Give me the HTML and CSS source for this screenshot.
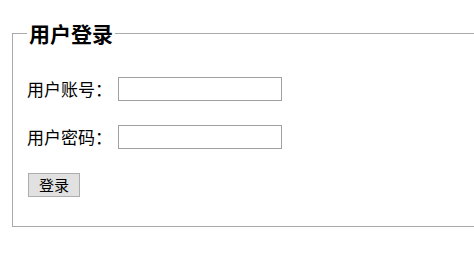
FILE: index.html
```html
<!DOCTYPE html>
<html lang="zh-CN">
<head>
    <meta charset="UTF-8">
    <meta name="viewport" content="width=device-width, initial-scale=1.0">
    <title>用户登录</title>
    <link rel="stylesheet" href="styles.css">
</head>
<body>

    <!-- 登录表单 -->
    <form class="login-form">
        <fieldset class="login-box">
            <legend class="login-title">用户登录</legend>
            <div class="form-row">
                <label for="account">用户账号：</label>
                <input type="text" id="account" class="form-input">
            </div>
            <div class="form-row">
                <label for="password">用户密码：</label>
                <input type="password" id="password" class="form-input">
            </div>
            <div class="form-row">
                <button type="button" class="login-btn">登录</button>
            </div>
        </fieldset>
    </form>

</body>
</html>
```
FILE: styles.css
```css
body {
    margin: 0;
    padding: 21px 0 0 12px;
    font-family: "Noto Sans CJK SC", "DejaVu Sans", sans-serif;
    font-size: 17px;
    color: #000;
    background-color: #fff;
}

.login-form {
    margin: 0;
}

/* 外框 - prawa krawędź poza ekranem */
.login-box {
    margin: 0;
    padding: 32px 0 29px 14px;
    border: 1px solid #a9a9a9;
    border-right: none;
}

.login-title {
    font-size: 21px;
    font-weight: bold;
    padding: 0 2px;
    line-height: 24px;
}

.form-row {
    display: flex;
    align-items: center;
    height: 24px;
    margin-bottom: 24px;
}

.form-row:last-child {
    margin-bottom: 0;
}

.form-row label {
    width: 91px;
    line-height: 24px;
}

.form-input {
    width: 164px;
    height: 24px;
    box-sizing: border-box;
    margin: 0;
    border: 1px solid #a0a0a0;
    padding: 1px 2px;
}

.login-btn {
    width: 52px;
    height: 24px;
    box-sizing: border-box;
    margin-left: 1px;
    padding: 0;
    font-family: "Noto Sans CJK SC", sans-serif;
    font-size: 15px;
    line-height: 20px;
    color: #000;
    background-color: #e1e1e1;
    border: 1px solid #adadad;
    border-radius: 0;
}
```
